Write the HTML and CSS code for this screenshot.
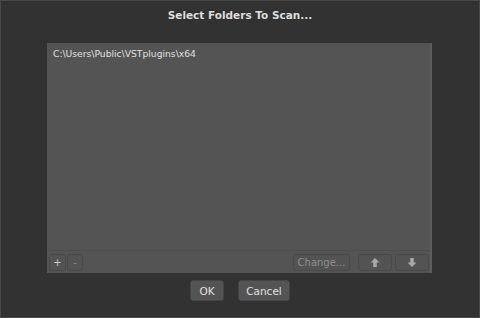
FILE: index.html
```html
<!DOCTYPE html>
<html lang="en">
<head>
    <meta charset="UTF-8">
    <title>Select Folders To Scan</title>
    <link rel="stylesheet" href="styles.css">
</head>
<body>
    <div class="dialog">
        <div class="title">Select Folders To Scan...</div>

        <div class="panel">
            <div class="list">
                <div class="item">C:\Users\Public\VSTplugins\x64</div>
            </div>
            <div class="toolbar">
                <button class="tool small">+</button>
                <button class="tool small dim">-</button>
                <span class="spacer"></span>
                <button class="tool change">Change...</button>
                <button class="tool arrow">
                    <svg width="10" height="11" viewBox="0 0 10 11"><path d="M5 1 L9.5 5.5 L6.8 5.5 L6.8 10 L3.2 10 L3.2 5.5 L0.5 5.5 Z" fill="#a8a8a8"/></svg>
                </button>
                <button class="tool arrow">
                    <svg width="10" height="11" viewBox="0 0 10 11"><path d="M5 10 L9.5 5.5 L6.8 5.5 L6.8 1 L3.2 1 L3.2 5.5 L0.5 5.5 Z" fill="#a8a8a8"/></svg>
                </button>
            </div>
        </div>

        <div class="actions">
            <button class="btn ok">OK</button>
            <button class="btn cancel">Cancel</button>
        </div>
    </div>
</body>
</html>
```

FILE: styles.css
```css
body {
    margin: 0;
    background-color: #323232;
    font-family: "DejaVu Sans", Verdana, sans-serif;
}

.dialog {
    width: 480px;
    height: 318px;
    box-sizing: border-box;
    border: 1px solid #484848;
    background-color: #323232;
    display: flex;
    flex-direction: column;
}

.title {
    height: 29px;
    line-height: 28px;
    text-align: center;
    color: #dcdcdc;
    font-size: 10.5px;
    font-weight: bold;
}

.panel {
    margin: 13px 47px 0 46px;
    height: 230px;
    background-color: #545454;
    border-right: 2px solid #5c5c5c;
    display: flex;
    flex-direction: column;
}

.list {
    flex: 1;
    padding: 5px 6px;
}

.item {
    color: #e0e0e0;
    font-size: 9.2px;
}

.toolbar {
    height: 22px;
    border-top: 1px solid #4d4d4d;
    display: flex;
    align-items: center;
    padding: 0 1px 0 2px;
    gap: 1px;
}

.spacer {
    flex: 1;
}

.tool {
    height: 17px;
    margin: 0;
    padding: 0;
    border: 1px solid #4a4a4a;
    border-radius: 3px;
    background-color: #535353;
    color: #c8c8c8;
    font-family: "DejaVu Sans", Verdana, sans-serif;
    font-size: 10px;
    display: flex;
    align-items: center;
    justify-content: center;
}

.small {
    width: 17px;
}

.dim {
    width: 16px;
    color: #8a8a8a;
}

.change {
    width: 57px;
    color: #8e8e8e;
    margin-right: 5px;
}

.arrow {
    width: 34px;
    margin-left: 2px;
}

.actions {
    display: flex;
    justify-content: center;
    gap: 14px;
    padding-top: 7px;
}

.btn {
    height: 21px;
    margin: 0;
    padding: 0;
    border: 1px solid #454545;
    border-radius: 3px;
    background-color: #545454;
    color: #e0e0e0;
    font-family: "DejaVu Sans", Verdana, sans-serif;
    font-size: 10.5px;
}

.ok {
    width: 34px;
}

.cancel {
    width: 52px;
}
```
